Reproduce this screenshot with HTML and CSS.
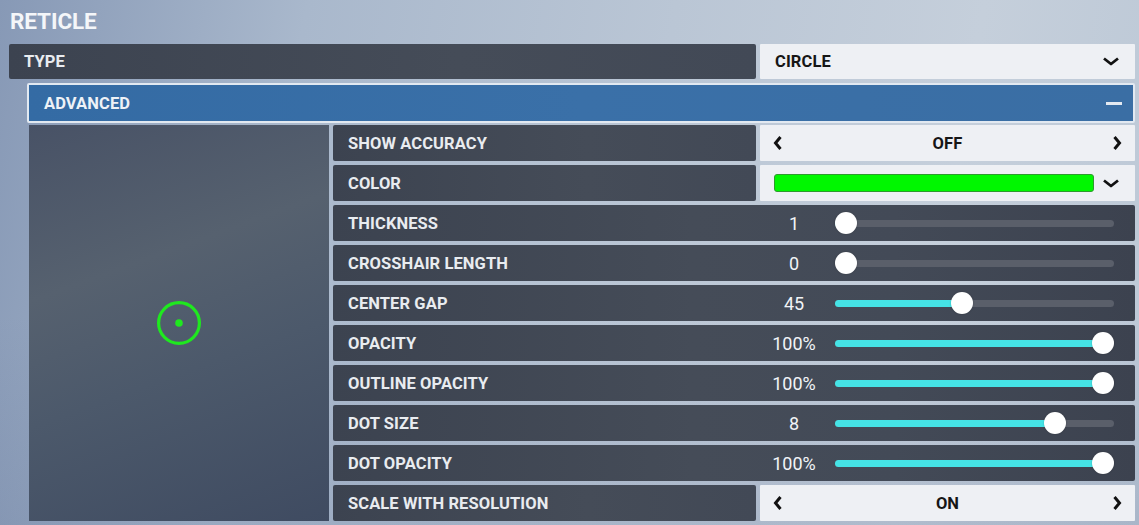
FILE: index.html
```html
<!DOCTYPE html>
<html>
<head>
<meta charset="utf-8">
<link rel="stylesheet" href="styles.css">
</head>
<body>
<div class="page">
  <h1 class="title">RETICLE</h1>
  <div class="type-row">
    <div class="cell label-cell">TYPE</div>
    <div class="select">
      <span class="select-text">CIRCLE</span>
      <svg class="chev-down" width="18" height="9" viewBox="0 0 18 9"><polyline points="2,1.5 9,7 16,1.5" fill="none" stroke="#111" stroke-width="2.8" stroke-linejoin="round"/></svg>
    </div>
  </div>
  <div class="advanced">
    <div class="adv-header">
      <span>ADVANCED</span>
      <span class="minus"></span>
    </div>
    <div class="adv-body">
      <div class="preview">
        <svg width="50" height="50" viewBox="0 0 50 50">
          <circle cx="25" cy="25" r="20.4" fill="none" stroke="#1fe81f" stroke-width="3.2"/>
          <circle cx="25" cy="25" r="3.8" fill="#1fe81f"/>
        </svg>
      </div>
      <div class="rows">
        <div class="row split">
          <div class="cell label-cell">SHOW ACCURACY</div>
          <div class="select toggle">
            <svg width="12" height="16" viewBox="0 0 12 16"><polyline points="8.5,2 3.5,8 8.5,14" fill="none" stroke="#111" stroke-width="3"/></svg>
            <span class="toggle-text">OFF</span>
            <svg width="12" height="16" viewBox="0 0 12 16"><polyline points="3.5,2 8.5,8 3.5,14" fill="none" stroke="#111" stroke-width="3"/></svg>
          </div>
        </div>
        <div class="row split">
          <div class="cell label-cell">COLOR</div>
          <div class="select color-select">
            <span class="swatch"></span>
            <svg class="chev-down" width="18" height="9" viewBox="0 0 18 9"><polyline points="2,1.5 9,7 16,1.5" fill="none" stroke="#111" stroke-width="2.8" stroke-linejoin="round"/></svg>
          </div>
        </div>
        <div class="row slider-row">
          <span class="row-label">THICKNESS</span>
          <span class="value">1</span>
          <div class="track"><div class="fill" style="width:11px"></div><div class="thumb" style="left:0px"></div></div>
        </div>
        <div class="row slider-row">
          <span class="row-label">CROSSHAIR LENGTH</span>
          <span class="value">0</span>
          <div class="track"><div class="fill" style="width:0px"></div><div class="thumb" style="left:0px"></div></div>
        </div>
        <div class="row slider-row">
          <span class="row-label">CENTER GAP</span>
          <span class="value">45</span>
          <div class="track"><div class="fill" style="width:127px"></div><div class="thumb" style="left:116px"></div></div>
        </div>
        <div class="row slider-row">
          <span class="row-label">OPACITY</span>
          <span class="value">100%</span>
          <div class="track"><div class="fill" style="width:268px"></div><div class="thumb" style="left:257px"></div></div>
        </div>
        <div class="row slider-row">
          <span class="row-label">OUTLINE OPACITY</span>
          <span class="value">100%</span>
          <div class="track"><div class="fill" style="width:268px"></div><div class="thumb" style="left:257px"></div></div>
        </div>
        <div class="row slider-row">
          <span class="row-label">DOT SIZE</span>
          <span class="value">8</span>
          <div class="track"><div class="fill" style="width:220px"></div><div class="thumb" style="left:209px"></div></div>
        </div>
        <div class="row slider-row">
          <span class="row-label">DOT OPACITY</span>
          <span class="value">100%</span>
          <div class="track"><div class="fill" style="width:268px"></div><div class="thumb" style="left:257px"></div></div>
        </div>
        <div class="row split">
          <div class="cell label-cell">SCALE WITH RESOLUTION</div>
          <div class="select toggle">
            <svg width="12" height="16" viewBox="0 0 12 16"><polyline points="8.5,2 3.5,8 8.5,14" fill="none" stroke="#111" stroke-width="3"/></svg>
            <span class="toggle-text">ON</span>
            <svg width="12" height="16" viewBox="0 0 12 16"><polyline points="3.5,2 8.5,8 3.5,14" fill="none" stroke="#111" stroke-width="3"/></svg>
          </div>
        </div>
      </div>
    </div>
  </div>
</div>
</body>
</html>
```

FILE: styles.css
```css
* { box-sizing: border-box; }
html, body { margin: 0; padding: 0; }
body {
  width: 1139px;
  height: 525px;
  overflow: hidden;
  font-family: Roboto, "Liberation Sans", sans-serif;
  background:
    linear-gradient(to bottom, rgba(255,255,255,0) 60%, rgba(80,100,140,0.18) 100%),
    linear-gradient(100deg, #8799b6 0%, #a9b8cc 25%, #bac6d5 55%, #c5cfdb 80%, #bcc8d6 100%);
}
.page {
  padding: 0 4px 0 9px;
}
.title {
  margin: 0;
  height: 44px;
  padding-top: 7px;
  padding-left: 1px;
  font-size: 22.5px;
  line-height: 28px;
  font-weight: 700;
  color: #f4f6f9;
  letter-spacing: -0.1px;
}
.type-row {
  display: flex;
  gap: 4px;
  height: 35px;
}
.cell {
  background: linear-gradient(90deg, #3c4350, #454c58 60%, #424956);
  border-radius: 2px;
  color: #e9ecf0;
  font-weight: 700;
  font-size: 16.5px;
  letter-spacing: 0.1px;
  display: flex;
  align-items: center;
  padding-left: 15px;
}
.type-row .label-cell { flex: 1; }
.select {
  width: 375px;
  flex: none;
  background: #eef0f4;
  border-radius: 1px;
  display: flex;
  align-items: center;
  color: #161616;
  font-weight: 700;
  font-size: 16.5px;
  letter-spacing: 0.1px;
}
.select-text { flex: 1; padding-left: 15px; }
.chev-down { margin-right: 15px; flex: none; }
.advanced {
  margin-left: 18px;
  margin-top: 4px;
}
.adv-header {
  height: 40px;
  border: 2px solid #e2e9f1;
  border-radius: 2px;
  background: linear-gradient(90deg, #346ba4, #3a70a8 50%, #3a6ea4);
  display: flex;
  align-items: center;
  justify-content: space-between;
  padding: 0 11px 0 15px;
  color: #eef2f7;
  font-weight: 700;
  font-size: 16.5px;
  letter-spacing: 0.1px;
}
.minus {
  width: 16px;
  height: 3px;
  background: #e3e9f1;
}
.adv-body {
  display: flex;
  gap: 4px;
  margin-top: 2px;
  padding-left: 2px;
}
.preview {
  width: 300px;
  height: 396px;
  flex: none;
  background:
    linear-gradient(160deg, #485266 0%, #56616f 35%, #4c596b 60%, #3f4b61 100%);
  display: flex;
  align-items: center;
  justify-content: center;
}
.rows {
  flex: 1;
  display: flex;
  flex-direction: column;
  gap: 4px;
}
.row {
  height: 36px;
  display: flex;
}
.split { gap: 4px; }
.split .label-cell { flex: 1; }
.toggle {
  justify-content: space-between;
  padding: 0 12px 0 12px;
}
.color-select { padding-left: 14px; }
.swatch {
  width: 321px;
  height: 18px;
  background: #00f700;
  border: 1px solid #2e9a2e;
  border-radius: 3px;
  margin-right: 8px;
}
.color-select .chev-down { margin-right: 15px; }
.slider-row {
  background: linear-gradient(90deg, #3c4350, #454c58 45%, #434a57 70%, #3c424f);
  border-radius: 2px;
  align-items: center;
  color: #e9ecf0;
}
.row-label {
  flex: 1;
  padding-left: 15px;
  font-weight: 700;
  font-size: 16.5px;
  letter-spacing: 0.1px;
}
.value {
  width: 60px;
  text-align: center;
  margin-right: 11px;
  font-size: 18px;
  font-weight: 400;
  color: #f2f4f7;
}
.track {
  position: relative;
  width: 279px;
  height: 7px;
  margin-right: 21px;
  border-radius: 4px;
  background: #5a5f6a;
}
.fill {
  height: 100%;
  border-radius: 4px;
  background: #45e3e6;
}
.thumb {
  position: absolute;
  top: -7.5px;
  width: 22px;
  height: 22px;
  border-radius: 50%;
  background: #ffffff;
  box-shadow: 0 0 2px rgba(0,0,0,0.25);
}
```
